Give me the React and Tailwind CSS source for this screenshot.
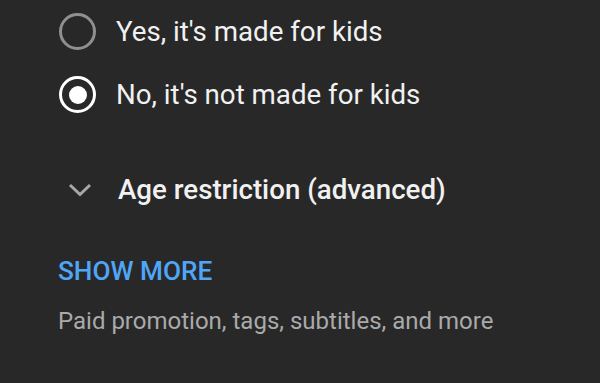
import { useState } from 'react';

const OPTIONS = [
  { id: 'yes', label: "Yes, it's made for kids" },
  { id: 'no', label: "No, it's not made for kids" },
];

const Radio = ({ checked }) => (
  <span
    className={
      checked
        ? 'flex h-[37px] w-[37px] shrink-0 items-center justify-center rounded-full border-[3.5px] border-white'
        : 'flex h-[37px] w-[37px] shrink-0 items-center justify-center rounded-full border-[3.5px] border-[#8f8f8f]'
    }
  >
    {checked ? <span className="h-[18px] w-[18px] rounded-full bg-white" /> : null}
  </span>
);

const App = () => {
  const [selected, setSelected] = useState('no');

  return (
    <div
      className="h-[383px] w-[600px] overflow-hidden bg-[#282828] pl-[59px] text-white"
      style={{ fontFamily: 'Roboto, "Liberation Sans", sans-serif' }}
    >
      <div className="flex flex-col">
        {OPTIONS.map((option, i) => (
          <button
            key={option.id}
            type="button"
            onClick={() => setSelected(option.id)}
            className={
              i === 0
                ? 'flex h-[63px] items-center gap-[20px] text-left'
                : 'flex h-[63px] items-center gap-[20px] text-left'
            }
          >
            <Radio checked={selected === option.id} />
            <span className="text-[27.7px] leading-none text-[#f1f1f1]">{option.label}</span>
          </button>
        ))}
      </div>

      <div className="mt-[32px] flex h-[64px] items-center">
        <svg width="24" height="14" viewBox="0 0 24 14" className="ml-[9px] shrink-0">
          <path d="M2 2 L12 11.5 L22 2" fill="none" stroke="#a8a8a8" strokeWidth="3" />
        </svg>
        <span className="ml-[26px] text-[27.7px] font-medium leading-none text-[#f1f1f1]">
          Age restriction (advanced)
        </span>
      </div>

      <div className="mt-[33px] flex h-[32px] items-center">
        <span className="-ml-[1px] text-[26.2px] font-medium leading-none text-[#4fa6f8]">SHOW MORE</span>
      </div>

      <div className="mt-[18px] flex h-[32px] items-center">
        <span className="-ml-[1px] text-[24px] leading-none text-[#aaaaaa]">
          Paid promotion, tags, subtitles, and more
        </span>
      </div>
    </div>
  );
};

export default App;
